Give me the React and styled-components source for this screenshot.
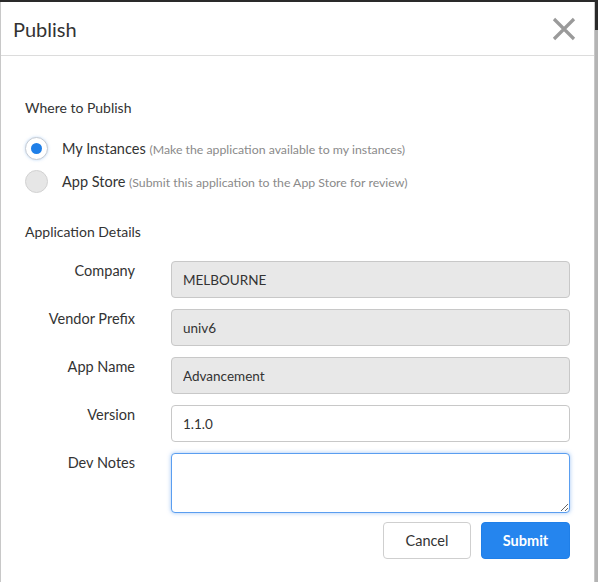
import React from "react";
import styled, { createGlobalStyle } from "styled-components";

const Global = createGlobalStyle`
  html, body { margin: 0; padding: 0; }
  body {
    width: 598px;
    height: 582px;
    overflow: hidden;
    background: linear-gradient(to bottom, #2a2a2a 0px, #2a2a2a 30px, #b4b4b4 30px);
    font-family: Lato, "Noto Sans", sans-serif;
  }
`;

const Modal = styled.div`
  box-sizing: border-box;
  width: 595px;
  height: 582px;
  margin-top: 2px;
  background: #fff;
  border-left: 1px solid #c8c8c8;
  border-right: 1px solid #c8c8c8;
  display: flex;
  flex-direction: column;
`;

const Header = styled.div`
  height: 54px;
  box-sizing: border-box;
  border-bottom: 1px solid #dcdcdc;
  display: flex;
  align-items: center;
  justify-content: space-between;
  padding: 0 18px 0 12px;
`;

const Title = styled.h1`
  margin: 0;
  font-size: 20px;
  font-weight: 400;
  color: #333;
`;

const CloseButton = styled.button`
  border: 0;
  background: none;
  padding: 0;
  width: 24px;
  height: 24px;
  display: flex;
  cursor: pointer;
`;

const Body = styled.div`
  padding: 42px 24px 0 24px;
  display: flex;
  flex-direction: column;
`;

const SectionTitle = styled.h2`
  margin: 0;
  font-size: 14px;
  font-weight: 400;
  color: #333;
  line-height: 20px;
`;

const RadioGroup = styled.div`
  display: flex;
  flex-direction: column;
  gap: 10px;
  margin: 19px 0 29px 0;
`;

const RadioRow = styled.label`
  display: flex;
  align-items: center;
  gap: 14px;
  height: 23px;
`;

const RadioDot = styled.span`
  box-sizing: border-box;
  width: 23px;
  height: 23px;
  border-radius: 50%;
  border: 1px solid ${(p) => (p.$checked ? "#c6cbd2" : "#d2d2d2")};
  background: ${(p) => (p.$checked ? "#fff" : "#e6e6e6")};
  box-shadow: ${(p) => (p.$checked ? "0 0 3px rgba(80,150,230,0.35)" : "none")};
  display: flex;
  align-items: center;
  justify-content: center;
  &::after {
    content: "";
    display: ${(p) => (p.$checked ? "block" : "none")};
    width: 11px;
    height: 11px;
    border-radius: 50%;
    background: #1f7fe8;
  }
`;

const RadioText = styled.span`
  font-size: 14.5px;
  color: #333;
`;

const Hint = styled.span`
  font-size: 12.3px;
  color: #8a8a8a;
`;

const Form = styled.div`
  display: grid;
  grid-template-columns: 110px 1fr;
  column-gap: 36px;
  row-gap: 11px;
  margin-top: 19px;
`;

const Label = styled.div`
  text-align: right;
  font-size: 14.5px;
  color: #333;
  padding-top: 1px;
`;

const Field = styled.input`
  box-sizing: border-box;
  width: 100%;
  height: 37px;
  border: 1px solid #c8c8c8;
  border-radius: 4px;
  padding: 0 11px;
  font-family: inherit;
  font-size: 13.5px;
  color: #333;
  background: ${(p) => (p.disabled ? "#e8e8e8" : "#fff")};
  outline: none;
  &:disabled { color: #333; -webkit-text-fill-color: #333; opacity: 1; }
`;

const Notes = styled.textarea`
  box-sizing: border-box;
  width: 100%;
  height: 60px;
  border: 1px solid #5a9ef0;
  border-radius: 4px;
  box-shadow: 0 0 4px rgba(80, 150, 235, 0.55);
  outline: none;
  font-family: inherit;
  font-size: 13.5px;
  display: block;
`;

const Actions = styled.div`
  display: flex;
  justify-content: flex-end;
  gap: 10px;
  margin-top: 9px;
`;

const Button = styled.button`
  box-sizing: border-box;
  height: 37px;
  width: ${(p) => (p.$primary ? "89px" : "88px")};
  border-radius: 4px;
  border: 1px solid ${(p) => (p.$primary ? "#1f7fe8" : "#cfcfcf")};
  background: ${(p) => (p.$primary ? "#2585ee" : "#fff")};
  color: ${(p) => (p.$primary ? "#fff" : "#333")};
  font-family: inherit;
  font-size: 14.5px;
  font-weight: ${(p) => (p.$primary ? 700 : 400)};
  cursor: pointer;
`;

const fields = [
  { label: "Company", value: "MELBOURNE", disabled: true },
  { label: "Vendor Prefix", value: "univ6", disabled: true },
  { label: "App Name", value: "Advancement", disabled: true },
  { label: "Version", value: "1.1.0", disabled: false },
];

export default function App() {
  return (
    <>
      <Global />
      <Modal>
        <Header>
          <Title>Publish</Title>
          <CloseButton aria-label="Close">
            <svg width="24" height="24" viewBox="0 0 24 24">
              <path d="M2 2 L22 22 M22 2 L2 22" stroke="#9a9a9a" strokeWidth="3.2" strokeLinecap="butt" />
            </svg>
          </CloseButton>
        </Header>
        <Body>
          <SectionTitle>Where to Publish</SectionTitle>
          <RadioGroup>
            <RadioRow>
              <RadioDot $checked />
              <RadioText>
                My Instances <Hint>(Make the application available to my instances)</Hint>
              </RadioText>
            </RadioRow>
            <RadioRow>
              <RadioDot />
              <RadioText>
                App Store <Hint>(Submit this application to the App Store for review)</Hint>
              </RadioText>
            </RadioRow>
          </RadioGroup>
          <SectionTitle>Application Details</SectionTitle>
          <Form>
            {fields.map((f) => (
              <React.Fragment key={f.label}>
                <Label>{f.label}</Label>
                <Field defaultValue={f.value} disabled={f.disabled} />
              </React.Fragment>
            ))}
            <Label>Dev Notes</Label>
            <Notes />
          </Form>
          <Actions>
            <Button>Cancel</Button>
            <Button $primary>Submit</Button>
          </Actions>
        </Body>
      </Modal>
    </>
  );
}
